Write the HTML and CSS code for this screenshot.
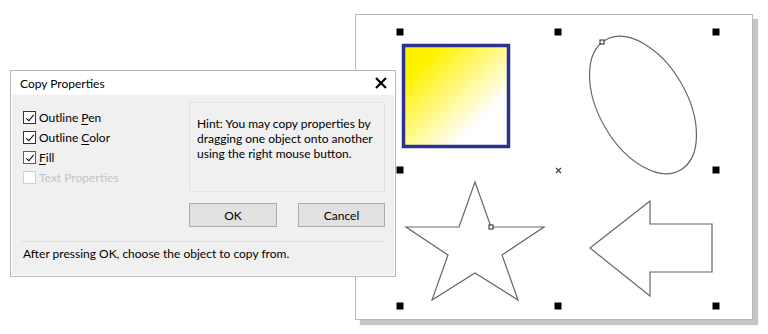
FILE: index.html
```html
<!DOCTYPE html>
<html lang="en">
<head>
    <meta charset="UTF-8">
    <meta name="viewport" content="width=device-width, initial-scale=1.0">
    <title>Copy Properties</title>
    <link rel="stylesheet" href="styles.css">
</head>
<body>

    <main class="stage">
        <!-- drawing page -->
        <div class="page">
            <svg viewBox="0 0 398 306" width="398" height="306">
                <defs>
                    <linearGradient id="fill" x1="0" y1="0" x2="1" y2="1">
                        <stop offset="0.18" stop-color="#fff200"/>
                        <stop offset="0.74" stop-color="#ffffff"/>
                    </linearGradient>
                </defs>

                <rect class="square" x="48.5" y="31.5" width="105" height="101"/>
                <ellipse class="shape" cx="288" cy="91" rx="44" ry="75" transform="rotate(-30 288 91)"/>
                <polygon class="shape" points="120,168 136,213 189,213 147,241 163,286 120,259 77,286 93,241 51,213 104,213"/>
                <polygon class="shape" points="235,234 295,187 295,210 357,210 357,258 295,258 295,282"/>

                <!-- nodes -->
                <rect class="node" x="245" y="26" width="4" height="4"/>
                <rect class="node" x="134" y="211" width="4" height="4"/>

                <!-- selection handles -->
                <g class="handles">
                    <rect x="41.5" y="14.5" width="7" height="7"/>
                    <rect x="199.5" y="14.5" width="7" height="7"/>
                    <rect x="357.5" y="14.5" width="7" height="7"/>
                    <rect x="41.5" y="152.5" width="7" height="7"/>
                    <rect x="357.5" y="152.5" width="7" height="7"/>
                    <rect x="41.5" y="288.5" width="7" height="7"/>
                    <rect x="199.5" y="288.5" width="7" height="7"/>
                    <rect x="357.5" y="288.5" width="7" height="7"/>
                </g>
                <path class="center" d="M201 154 L206 159 M206 154 L201 159"/>
            </svg>
        </div>

        <!-- dialog -->
        <section class="dialog">
            <div class="titlebar">
                <span>Copy Properties</span>
                <svg class="close" viewBox="0 0 14 14" width="14" height="14">
                    <path d="M2 2 L12 12 M12 2 L2 12"/>
                </svg>
            </div>
            <div class="dialog-body">
                <div class="top">
                    <ul class="checks">
                        <li><span class="box checked"></span><span>Outline <u>P</u>en</span></li>
                        <li><span class="box checked"></span><span>Outline <u>C</u>olor</span></li>
                        <li><span class="box checked focus"></span><span><u>F</u>ill</span></li>
                        <li class="disabled"><span class="box"></span><span>Text Properties</span></li>
                    </ul>
                    <div class="side">
                        <div class="hint">Hint: You may copy properties by dragging one object onto another using the right mouse button.</div>
                        <div class="buttons">
                            <button class="btn ok">OK</button>
                            <button class="btn">Cancel</button>
                        </div>
                    </div>
                </div>
                <p class="footer">After pressing OK, choose the object to copy from.</p>
            </div>
        </section>
    </main>

</body>
</html>
```

FILE: styles.css
```css
*{
    margin: 0;
    padding: 0;
    box-sizing: border-box;
}
html{
    font: 12px Lato, "Noto Sans", sans-serif;
}
body{
    background: #fff;
    color: #000;
    overflow: hidden;
}
ul{
    list-style: none;
}
.stage{
    position: relative;
    width: 768px;
    height: 334px;
    padding: 14px 0 0 355px;
}

/* page with shapes */
.page{
    width: 398px;
    height: 306px;
    background: #fff;
    box-shadow: inset 0 0 0 1px #b8b8b8, 5px 5px 1px #c6c6c6;
}
.page svg{
    display: block;
}
.square{
    fill: url(#fill);
    stroke: #2e3192;
    stroke-width: 3.5;
}
.shape{
    fill: none;
    stroke: #666;
    stroke-width: 1.2;
}
.node{
    fill: #fff;
    stroke: #222;
    stroke-width: 1;
}
.handles rect{
    fill: #000;
}
.center{
    stroke: #444;
    stroke-width: 1.2;
}

/* dialog */
.dialog{
    position: absolute;
    left: 10px;
    top: 70px;
    width: 386px;
    height: 207px;
    border: 1px solid #b9b9b9;
    background: #fff;
    display: flex;
    flex-direction: column;
}
.titlebar{
    height: 24px;
    display: flex;
    align-items: center;
    justify-content: space-between;
    padding: 0 7px 0 9px;
}
.close{
    display: block;
}
.close path{
    stroke: #000;
    stroke-width: 2.2;
}
.dialog-body{
    flex: 1;
    margin: 0 1px 1px;
    background: #f0f0f0;
    padding: 7px 9px 0 10px;
}
.top{
    display: flex;
    justify-content: space-between;
}
.checks{
    margin-top: 5px;
    padding-left: 1px;
}
.checks li{
    height: 20px;
    display: flex;
    align-items: center;
    gap: 3px;
}
.checks u{
    text-underline-offset: 2px;
}
.box{
    width: 13px;
    height: 13px;
    border: 1px solid #333;
    background: #fff;
    position: relative;
}
.box.focus{
    border-color: #0078d7;
}
.box.checked::after{
    content: "";
    position: absolute;
    left: 3.5px;
    top: 1px;
    width: 3px;
    height: 7px;
    border: solid #000;
    border-width: 0 1.6px 1.6px 0;
    transform: rotate(40deg);
}
.disabled{
    color: #c4c4c4;
}
.disabled .box{
    border-color: #d0d0d0;
}
.side{
    width: 196px;
}
.hint{
    height: 90px;
    border: 1px solid #e3e3e3;
    padding: 13px 2px 0 7px;
    line-height: 15px;
}
.buttons{
    display: flex;
    justify-content: space-between;
    margin-top: 11px;
}
.btn{
    font: inherit;
    color: #000;
    height: 24px;
    background: #e1e1e1;
    border: 1px solid #adadad;
}
.btn.ok{
    width: 88px;
}
.btn:last-child{
    width: 87px;
}
.footer{
    margin-top: 14px;
    border-top: 1px solid #dcdcdc;
    padding-top: 4px;
    line-height: 16px;
    padding-left: 1px;
}
```
